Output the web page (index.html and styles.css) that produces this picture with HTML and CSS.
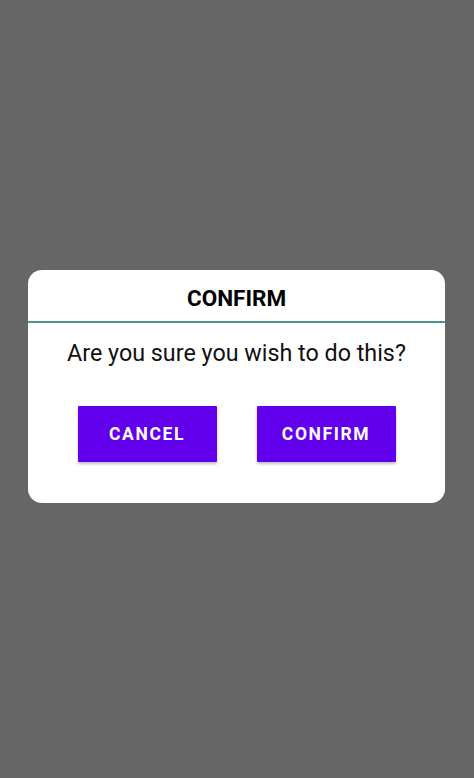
FILE: index.html
```html
<!DOCTYPE html>
<html lang="en">
<head>
    <meta charset="UTF-8">
    <title>Confirm</title>
    <link rel="stylesheet" href="styles.css">
</head>
<body>
    <div class="dialog">
        <div class="dialog-title">CONFIRM</div>
        <div class="dialog-message">Are you sure you wish to do this?</div>
        <div class="buttons">
            <button class="btn" id="cancelBtn">CANCEL</button>
            <button class="btn" id="confirmBtn">CONFIRM</button>
        </div>
    </div>
</body>
</html>
```

FILE: styles.css
```css
html, body {
    margin: 0;
    height: 100%;
}
body {
    background: #666666;
    font-family: Roboto, "Liberation Sans", sans-serif;
    padding: 270px 29px 0 28px;
    box-sizing: border-box;
}
.dialog {
    background: #ffffff;
    border-radius: 14px;
    height: 233px;
    box-sizing: border-box;
}
.dialog-title {
    height: 53px;
    border-bottom: 2px solid #4a968f;
    display: flex;
    align-items: center;
    justify-content: center;
    font-size: 22.5px;
    font-weight: bold;
    color: #000;
    padding-top: 4px;
    box-sizing: border-box;
}
.dialog-message {
    text-align: center;
    font-size: 23.3px;
    color: #111;
    padding-top: 15px;
    line-height: 30px;
}
.buttons {
    display: flex;
    justify-content: center;
    gap: 40px;
    margin-top: 38px;
}
.btn {
    width: 139px;
    height: 56px;
    background: #6200ee;
    color: #fff;
    border: none;
    border-radius: 1px;
    font-family: Roboto, "Liberation Sans", sans-serif;
    font-size: 17.5px;
    font-weight: bold;
    letter-spacing: 1.6px;
    box-shadow: 0 2px 3px rgba(0, 0, 0, 0.25);
    cursor: pointer;
}
```
